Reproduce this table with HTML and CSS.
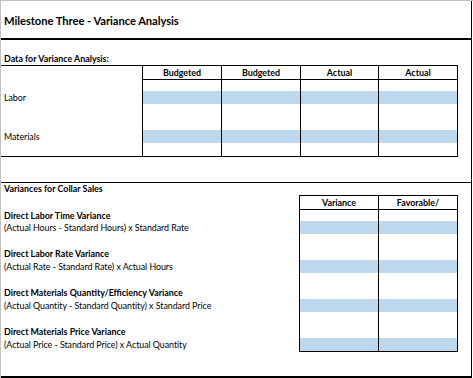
FILE: index.html
```html
<!DOCTYPE html>
<html lang="en">
<head>
<meta charset="utf-8">
<title>Milestone Three - Variance Analysis</title>
<link rel="stylesheet" href="styles.css">
</head>
<body>
<div class="page">
  <div class="sel-bar"></div>
  <div class="frame">
    <header class="title-row">
      <h1 class="title">Milestone Three - Variance Analysis</h1>
    </header>

    <section class="data-section">
      <div class="spacer-row"></div>
      <div class="caption">Data for Variance Analysis:</div>
      <div class="data-table">
        <div class="drow head">
          <div class="lbl"></div>
          <div class="cell w79">Budgeted</div>
          <div class="cell w79">Budgeted</div>
          <div class="cell w78">Actual</div>
          <div class="cell w79">Actual</div>
        </div>
        <div class="drow h11">
          <div class="lbl"></div>
          <div class="cell w79"></div><div class="cell w79"></div><div class="cell w78"></div><div class="cell w79"></div>
        </div>
        <div class="drow h13 blue">
          <div class="lbl">Labor</div>
          <div class="cell w79"></div><div class="cell w79"></div><div class="cell w78"></div><div class="cell w79"></div>
        </div>
        <div class="drow h26">
          <div class="lbl"></div>
          <div class="cell w79"></div><div class="cell w79"></div><div class="cell w78"></div><div class="cell w79"></div>
        </div>
        <div class="drow h13 blue">
          <div class="lbl">Materials</div>
          <div class="cell w79"></div><div class="cell w79"></div><div class="cell w78"></div><div class="cell w79"></div>
        </div>
        <div class="drow h13">
          <div class="lbl"></div>
          <div class="cell w79"></div><div class="cell w79"></div><div class="cell w78"></div><div class="cell w79"></div>
        </div>
      </div>
    </section>

    <section class="var-section">
      <div class="caption cap12">Variances for Collar Sales</div>
      <div class="var-body">
        <div class="var-labels">
          <div class="vl h11 strong">Direct Labor Time Variance</div>
          <div class="vl h13">(Actual Hours - Standard Hours) x Standard Rate</div>
          <div class="vl h13"></div>
          <div class="vl h13 strong">Direct Labor Rate Variance</div>
          <div class="vl h13">(Actual Rate - Standard Rate) x Actual Hours</div>
          <div class="vl h13"></div>
          <div class="vl h13 strong">Direct Materials Quantity/Efficiency Variance</div>
          <div class="vl h13">(Actual Quantity - Standard Quantity) x Standard Price</div>
          <div class="vl h13"></div>
          <div class="vl h13 strong">Direct Materials Price Variance</div>
          <div class="vl h13">(Actual Price - Standard Price) x Actual Quantity</div>
        </div>
        <div class="var-table">
          <div class="vrow head"><div class="vc">Variance</div><div class="vc sep">Favorable/</div></div>
          <div class="vrow h11"><div class="vc"></div><div class="vc sep"></div></div>
          <div class="vrow h13 blue"><div class="vc"></div><div class="vc sep"></div></div>
          <div class="vrow h13"><div class="vc"></div><div class="vc sep"></div></div>
          <div class="vrow h13"><div class="vc"></div><div class="vc sep"></div></div>
          <div class="vrow h13 blue"><div class="vc"></div><div class="vc sep"></div></div>
          <div class="vrow h13"><div class="vc"></div><div class="vc sep"></div></div>
          <div class="vrow h13"><div class="vc"></div><div class="vc sep"></div></div>
          <div class="vrow h13 blue"><div class="vc"></div><div class="vc sep"></div></div>
          <div class="vrow h13"><div class="vc"></div><div class="vc sep"></div></div>
          <div class="vrow h13"><div class="vc"></div><div class="vc sep"></div></div>
          <div class="vrow h13 blue"><div class="vc"></div><div class="vc sep"></div></div>
        </div>
      </div>
    </section>
  </div>
</div>
</body>
</html>
```
FILE: styles.css
```css
* { box-sizing: border-box; margin: 0; padding: 0; }
html, body { background: #ffffff; }
body {
  margin: 0;
  font-family: Lato, "Liberation Sans", sans-serif;
  font-size: 8.9px;
  color: #000;
}
.page {
  position: relative;
  width: 473px;
  height: 378px;
  border-top: 1px solid #c3c3c3;
  border-left: 1px solid #c3c3c3;
  overflow: hidden;
}
.sel-bar {
  position: absolute;
  top: -1px;
  left: 298px;
  width: 80px;
  height: 1px;
  background: #217346;
}
.frame {
  width: 471px;
  height: 377px;
  border-right: 1px solid #000;
  border-bottom: 2px solid #000;
  display: flex;
  flex-direction: column;
}
.title-row {
  height: 39px;
  border-bottom: 2px solid #000;
  display: flex;
  align-items: center;
  padding-left: 3px;
}
.title {
  font-size: 11.2px;
  font-weight: 700;
  letter-spacing: -0.05px;
  line-height: 13px;
  padding-top: 1px;
}
.data-section {
  height: 143px;
  border-bottom: 1px solid #000;
}
.spacer-row { height: 13px; }
.caption {
  height: 12px;
  line-height: 12px;
  font-weight: 700;
  padding-left: 3px;
}
.data-table {
  width: 457px;
  border-top: 1px solid #000;
  border-bottom: 1px solid #000;
  border-right: 1px solid #000;
}
.drow { display: flex; }
.drow .lbl {
  width: 141px;
  padding-left: 3px;
  display: flex;
  align-items: center;
  letter-spacing: -0.05px;
}
.drow .cell {
  border-left: 1px solid #000;
  display: flex;
  align-items: center;
  justify-content: center;
  font-weight: 700;
}
.w79 { width: 79px; }
.w78 { width: 78px; }
.drow.head { height: 14px; }
.drow.head .cell { border-bottom: 1px solid #000; }
.h11 { height: 11px; }
.h13 { height: 13px; }
.h26 { height: 26px; }
.drow.blue .cell { background: #bdd7ee; }

.var-section { flex: 1; }
.cap12 { height: 12px; }
.var-body { display: flex; }
.var-labels {
  width: 298px;
  padding-top: 15px;
  display: flex;
  flex-direction: column;
}
.vl {
  padding-left: 3px;
  display: flex;
  align-items: center;
  white-space: nowrap;
  letter-spacing: -0.05px;
}
.vl.strong { font-weight: 700; letter-spacing: 0; }
.var-table {
  width: 159px;
  border: 1px solid #000;
}
.vrow { display: flex; }
.vrow .vc {
  width: 78px;
  display: flex;
  align-items: center;
  justify-content: center;
}
.vrow .vc.sep { width: 79px; border-left: 1px solid #000; }
.vrow.head { height: 14px; border-bottom: 1px solid #000; }
.vrow.head .vc { font-weight: 700; }
.vrow.blue { background: #bdd7ee; }
```
